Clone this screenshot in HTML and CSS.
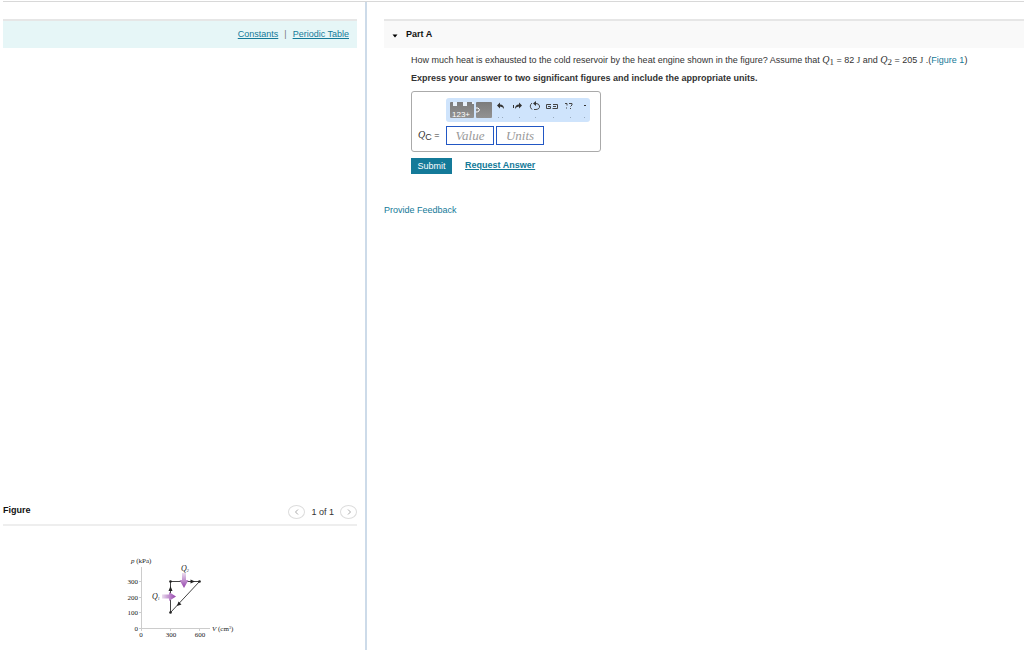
FILE: index.html
```html
<!DOCTYPE html>
<html lang="en">
<head>
    <meta charset="UTF-8">
    <meta name="viewport" content="width=device-width, initial-scale=1.0">
    <title>Part A</title>
    <link rel="stylesheet" href="styles.css">
</head>
<body>
    <div class="page">
        <!-- Left pane -->
        <aside class="sidebar">
            <nav class="resources">
                <a href="#">Constants</a>
                <span class="divider">|</span>
                <a href="#">Periodic Table</a>
            </nav>

            <section class="figure-panel" id="figure1">
                <div class="figure-header">
                    <h2>Figure</h2>
                    <div class="pager">
                        <button type="button" aria-label="Previous figure">
                            <svg width="6" height="8" viewBox="0 0 6 8"><path d="M4 1.5 L1.5 4 L4 6.5"/></svg>
                        </button>
                        <span>1 of 1</span>
                        <button type="button" aria-label="Next figure">
                            <svg width="6" height="8" viewBox="0 0 6 8"><path d="M2 1.5 L4.5 4 L2 6.5"/></svg>
                        </button>
                    </div>
                </div>
                <svg class="diagram" width="120" height="90" viewBox="0 0 120 90">
                    <defs>
                        <linearGradient id="heatRight" x1="0" x2="1" y1="0" y2="0">
                            <stop offset="0" stop-color="#eadcee"/>
                            <stop offset="1" stop-color="#9440ac"/>
                        </linearGradient>
                        <linearGradient id="heatDown" x1="0" x2="0" y1="0" y2="1">
                            <stop offset="0" stop-color="#eadcee"/>
                            <stop offset="1" stop-color="#9440ac"/>
                        </linearGradient>
                    </defs>
                    <!-- axes -->
                    <path class="axis" d="M16.5 17 V78.5 H85 M14 31.5 H17 M14 47.5 H17 M14 62.5 H17 M14 78.5 H17 M16.5 78 V81 M45.5 78 V81 M74.5 78 V81"/>
                    <text x="6" y="13"><tspan class="italic">p</tspan> (kPa)</text>
                    <text x="13" y="34" class="end">300</text>
                    <text x="13" y="50" class="end">200</text>
                    <text x="13" y="65" class="end">100</text>
                    <text x="13" y="81" class="end">0</text>
                    <text x="16" y="87" class="middle">0</text>
                    <text x="46" y="87" class="middle">300</text>
                    <text x="75" y="87" class="middle">600</text>
                    <text x="87" y="81"><tspan class="italic">V</tspan> (cm<tspan class="sub" dy="-2">3</tspan><tspan dy="2">)</tspan></text>
                    <!-- cycle -->
                    <path class="cycle" d="M45.5 62.5 V31.5 H74.5 Z"/>
                    <!-- heat arrows -->
                    <path fill="url(#heatRight)" d="M37 44.5 H44 V42 L51 46.5 L44 51 V48.5 H37 Z"/>
                    <path fill="url(#heatDown)" d="M57 23 H61 V30 H63.5 L59 38 L54.5 30 H57 Z"/>
                    <text x="27" y="49" class="heat italic">Q<tspan class="sub" dy="1">1</tspan></text>
                    <text x="56" y="21" class="heat italic">Q<tspan class="sub" dy="1">2</tspan></text>
                    <circle cx="45.5" cy="31.5" r="1.3"/>
                    <circle cx="74.5" cy="31.5" r="1.3"/>
                    <circle cx="45.5" cy="62.5" r="1.3"/>
                    <path d="M45.5 36 L47.5 41 H43.5 Z M70 31.5 L65.5 29.5 V33.5 Z M52 56 L53.5 51.5 L56.5 54.5 Z"/>
                </svg>
            </section>
        </aside>

        <!-- Right pane -->
        <main class="content">
            <header class="part-header">
                <svg width="6" height="4" viewBox="0 0 6 4"><path d="M0.5 0.5 H5.5 L3 3.5 Z"/></svg>
                <h1>Part A</h1>
            </header>

            <div class="question">
                <p>How much heat is exhausted to the cold reservoir by the heat engine shown in the figure? Assume that <span class="math"><i>Q</i><small>1</small></span> = 82 <span class="unit">J</span> and <span class="math"><i>Q</i><small>2</small></span> = 205 <span class="unit">J</span> .(<a href="#figure1">Figure 1</a>)</p>
                <p class="instruction">Express your answer to two significant figures and include the appropriate units.</p>

                <form>
                    <div class="answer-box">
                        <div class="toolbar">
                            <button type="button" class="template" aria-label="Templates">
                                <svg width="24" height="16" viewBox="0 0 24 16">
                                    <path class="light" d="M3 0 H7 V4 H3 Z M13 0 H17 V4 H13 Z M22 0 H24 V2 H22 Z"/>
                                    <text x="2" y="15">123+</text>
                                </svg>
                            </button>
                            <button type="button" class="symbols" aria-label="Symbols">
                                <svg width="16" height="16" viewBox="0 0 16 16"><path class="stroke" d="M0 6 H2 Q4 7 3 9 Q2 10 0 10"/></svg>
                            </button>
                            <button type="button" class="tool" aria-label="Undo">
                                <svg width="12" height="20" viewBox="0 0 12 20"><path d="M2 5.5 L5 2.5 V4.5 Q9 4.5 9 9 Q8 6.5 5 6.5 V8.5 Z"/><path class="dots" d="M3 17.5 H4 M7 17.5 H8"/></svg>
                            </button>
                            <button type="button" class="tool" aria-label="Redo">
                                <svg width="12" height="20" viewBox="0 0 12 20"><path d="M10 5.5 L7 2.5 V4.5 Q3 4.5 3 9 Q4 6.5 7 6.5 V8.5 Z M1 5 H2 V8 H1 Z"/><path class="dots" d="M7 17.5 H8"/></svg>
                            </button>
                            <button type="button" class="tool" aria-label="Reset">
                                <svg width="12" height="20" viewBox="0 0 12 20"><path class="ring" d="M3 3 Q-0.5 6 3 9.5 M5 9.5 H7 Q11 9 10.5 6 Q10 3.5 7 3.5"/><path d="M7 1 V6 L4 3.5 Z"/><path class="dots" d="M6 17.5 H7"/></svg>
                            </button>
                            <button type="button" class="tool" aria-label="Keyboard shortcuts">
                                <svg width="14" height="20" viewBox="0 0 14 20"><path class="ring" d="M6 4.5 H1.5 V8.5 H5.5 V6.5 H3 M8 4.5 H12.5 V8.5 H7.5 M8 6.5 H11"/><path class="dots" d="M8 17.5 H9"/></svg>
                            </button>
                            <button type="button" class="tool" aria-label="Help">
                                <svg width="12" height="20" viewBox="0 0 12 20"><path class="ring" d="M2 3.5 H4 V5.5 M3.5 7.5 V8.5 M6 3.5 H9 V5 L7.5 6.5 M7.5 8 V9"/><path class="dots" d="M7 17.5 H8"/></svg>
                            </button>
                            <button type="button" class="tool" aria-label="More">
                                <svg width="12" height="20" viewBox="0 0 12 20"><path d="M6 5 H8 V6 H6 Z"/><path class="dots" d="M6 17.5 H7"/></svg>
                            </button>
                        </div>
                        <div class="fields">
                            <label for="value"><span class="math"><i>Q</i><small class="cold">C</small></span> =</label>
                            <input type="text" id="value" placeholder="Value">
                            <input type="text" id="units" placeholder="Units" aria-label="Units">
                        </div>
                    </div>
                    <div class="actions">
                        <button type="submit" class="submit">Submit</button>
                        <a href="#">Request Answer</a>
                    </div>
                </form>
            </div>

            <a class="feedback" href="#">Provide Feedback</a>
        </main>
    </div>
</body>
</html>
```

FILE: styles.css
```css
* {
    box-sizing: border-box;
}

body {
    margin: 0;
    padding: 1px 0 0 3px;
    font-family: "Liberation Sans", Arial, sans-serif;
    font-size: 9px;
    line-height: 12px;
    color: #333;
    background-color: #fff;
}

a {
    color: #147a99;
}

h1,
h2 {
    margin: 0;
    font-size: 9px;
    color: #111;
}

button {
    padding: 0;
    border: none;
    font-family: inherit;
    cursor: pointer;
}

.page {
    display: flex;
    min-height: calc(100vh - 1px);
    border-top: 1px solid #d8d8d8;
}

/* Left pane */
.sidebar {
    display: flex;
    flex-direction: column;
    width: 35%;
    min-width: 364px;
    padding: 17px 8px 0 0;
    border-right: 2px solid #cddbe9;
}

.resources {
    display: flex;
    justify-content: flex-end;
    gap: 6px;
    padding: 7px 8px 8px;
    border-top: 2px solid #e6e6e6;
    background-color: #e6f6f7;
}

.divider {
    color: #777;
}

.figure-panel {
    margin-top: auto;
}

.figure-header {
    display: flex;
    justify-content: space-between;
    padding-bottom: 5px;
    border-bottom: 2px solid #eee;
}

.pager {
    display: flex;
    align-items: center;
    gap: 6px;
    padding-top: 1px;
}

.pager button {
    display: flex;
    align-items: center;
    justify-content: center;
    width: 17px;
    height: 14px;
    border: 1px solid #ddd;
    border-radius: 50%;
    background-color: #fff;
}

.pager path {
    fill: none;
    stroke: #aaa;
}

.diagram {
    display: block;
    margin: 24px 0 10px 122px;
    font-family: "Liberation Serif", "Times New Roman", serif;
    font-size: 7px;
    fill: #222;
    overflow: visible;
}

.axis {
    fill: none;
    stroke: #ccc;
}

.cycle {
    fill: none;
    stroke: #444;
}

.italic {
    font-style: italic;
}

.end {
    text-anchor: end;
}

.middle {
    text-anchor: middle;
}

.heat {
    font-size: 8px;
}

.sub {
    font-size: 4px;
}

/* Right pane */
.content {
    flex: 1;
    padding: 17px 0 0 17px;
}

.part-header {
    display: flex;
    align-items: center;
    gap: 8px;
    padding: 7px 8px 8px;
    border-top: 2px solid #e6e6e6;
    background-color: #f9f9f9;
}

.part-header svg {
    margin-top: 3px;
}

.question {
    padding: 6px 0 0 27px;
}

.question p {
    margin: 0;
    line-height: 12px;
}

.question p a {
    text-decoration: none;
}

.question .instruction {
    margin-top: 5px;
    font-weight: bold;
}

.math {
    font-family: "Liberation Serif", "Times New Roman", serif;
    font-size: 10px;
    line-height: 10px;
}

.math small {
    font-size: 9px;
    vertical-align: -2px;
}

.math .cold {
    font-family: "Liberation Sans", Arial, sans-serif;
}

.unit {
    font-family: "Liberation Serif", "Times New Roman", serif;
    font-size: 9px;
}

.answer-box {
    width: 190px;
    margin-top: 7px;
    padding: 6px;
    border: 1px solid #aaa;
    border-radius: 3px;
}

.toolbar {
    display: flex;
    align-items: center;
    width: 144px;
    height: 24px;
    margin-left: 28px;
    padding-left: 4px;
    border-radius: 3px;
    background-color: #cfe4fc;
}

.toolbar button {
    display: flex;
    background: none;
}

.toolbar .template,
.toolbar .symbols {
    border-radius: 1px;
    background: linear-gradient(#7c7c7c, #929292);
}

.toolbar .template {
    margin-right: 2px;
}

.toolbar .tool {
    justify-content: center;
    flex: 0 0 17px;
}

.toolbar .tool:last-child {
    flex: 1;
}

.toolbar text {
    font-size: 8px;
    fill: #fff;
}

.toolbar .light {
    fill: #e8f1fb;
}

.toolbar .stroke {
    fill: none;
    stroke: #fff;
}

.toolbar .tool path {
    fill: #333;
}

.toolbar .tool .ring {
    fill: none;
    stroke: #444;
}

.toolbar .tool .dots {
    stroke: #9aacc0;
}

.fields {
    display: flex;
    align-items: center;
    margin-top: 4px;
}

.fields label {
    width: 28px;
}

.fields input {
    width: 48px;
    height: 19px;
    margin-right: 2px;
    padding: 0;
    border: 1px solid #2257c4;
    font-family: "Liberation Serif", "Times New Roman", serif;
    font-size: 13px;
    font-style: italic;
    text-align: center;
}

.fields input::placeholder {
    color: #999;
}

.actions {
    display: flex;
    gap: 13px;
    margin-top: 6px;
}

.submit {
    width: 41px;
    height: 16px;
    font-size: 9px;
    color: #fff;
    background-color: #147a99;
}

.actions a {
    font-weight: bold;
    line-height: 14px;
}

.feedback {
    display: inline-block;
    margin-top: 30px;
    text-decoration: none;
}
```
